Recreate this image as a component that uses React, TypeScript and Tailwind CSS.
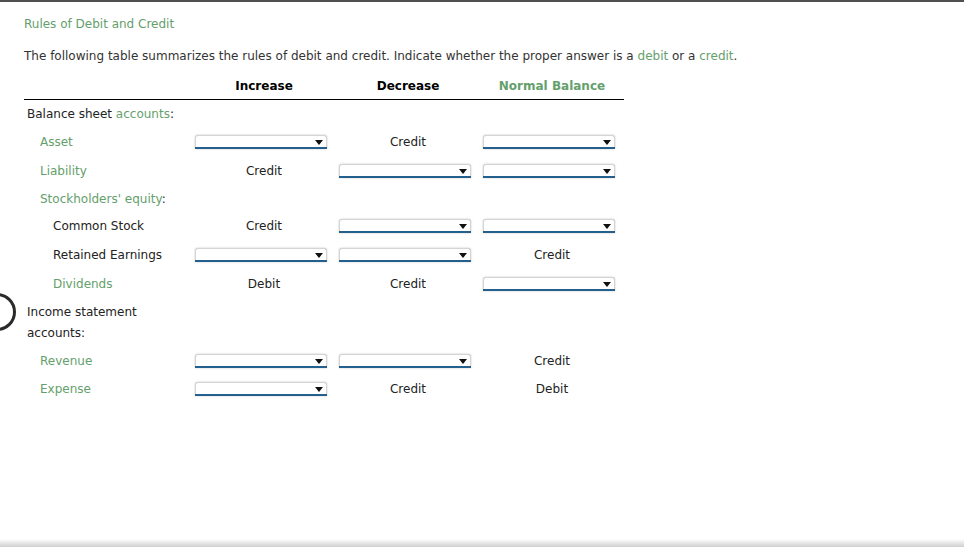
import React from "react";

const green = "text-[#64a06c]";

function Select() {
  return (
    <div className="ml-[3px] relative w-[132px] h-[14px] rounded-t-[3px] bg-white border border-b-0 border-[#d4d4d4] shadow-[0_0_2px_rgba(0,0,0,0.25)]">
      <div className="absolute left-[-1px] right-[-1px] bottom-0 h-[2px] bg-[#23608e]" />
      <svg className="absolute right-[3px] top-[4px]" width="8" height="5" viewBox="0 0 8 5">
        <polygon points="0,0 8,0 4,5" fill="#111" />
      </svg>
    </div>
  );
}

type Cell = { t: "s" } | { t: "x"; v: string } | { t: "e" };

function C({ c }: { c: Cell }) {
  if (c.t === "s")
    return (
      <div className="w-[144px] flex items-center">
        <Select />
      </div>
    );
  if (c.t === "x")
    return <div className="w-[144px] text-center text-[#222]">{c.v}</div>;
  return <div className="w-[144px]" />;
}

const S: Cell = { t: "s" };
const E: Cell = { t: "e" };
const X = (v: string): Cell => ({ t: "x", v });

function Row({
  label,
  cells,
  h,
  indent,
}: {
  label: React.ReactNode;
  cells: Cell[];
  h: string;
  indent: string;
}) {
  return (
    <div className={`flex items-center ${h}`}>
      <div className={`w-[168px] ${indent}`}>{label}</div>
      {cells.map((c, i) => (
        <C key={i} c={c} />
      ))}
    </div>
  );
}

export default function App() {
  return (
    <div
      className="relative w-[964px] h-[547px] bg-white flex flex-col overflow-hidden text-[12px] text-[#222]"
      style={{ fontFamily: '"DejaVu Sans", Verdana, sans-serif' }}
    >
      <div className="h-[2px] bg-[#505050] shrink-0" />
      <div className="pl-[24px] pt-[15px]">
        <div className={`${green} leading-[15px]`}>Rules of Debit and Credit</div>
        <div className="mt-[17px] leading-[15px] text-[#333]">
          The following table summarizes the rules of debit and credit. Indicate whether the proper answer is a{" "}
          <span className={green}>debit</span> or a <span className={green}>credit</span>.
        </div>
        <div className="mt-[8px] w-[600px]">
          <div className="flex h-[28px] items-center border-b border-black font-bold">
            <div className="w-[168px]" />
            <div className="w-[144px] text-center text-black">Increase</div>
            <div className="w-[144px] text-center text-black">Decrease</div>
            <div className={`w-[144px] text-center ${green}`}>Normal Balance</div>
          </div>
          <Row
            h="h-[28px]"
            indent="pl-[3px]"
            label={
              <>
                Balance sheet <span className={green}>accounts</span>:
              </>
            }
            cells={[E, E, E]}
          />
          <Row h="h-[28px]" indent="pl-[16px]" label={<span className={green}>Asset</span>} cells={[S, X("Credit"), S]} />
          <Row h="h-[29px]" indent="pl-[16px]" label={<span className={green}>Liability</span>} cells={[X("Credit"), S, S]} />
          <Row
            h="h-[27px]"
            indent="pl-[16px]"
            label={
              <>
                <span className={green}>Stockholders' equity</span>:
              </>
            }
            cells={[E, E, E]}
          />
          <Row h="h-[28px]" indent="pl-[29px]" label="Common Stock" cells={[X("Credit"), S, S]} />
          <Row h="h-[29px]" indent="pl-[29px]" label="Retained Earnings" cells={[S, S, X("Credit")]} />
          <Row
            h="h-[29px]"
            indent="pl-[29px]"
            label={<span className={green}>Dividends</span>}
            cells={[X("Debit"), X("Credit"), S]}
          />
          <Row
            h="h-[49px]"
            indent="pl-[3px] leading-[21px]"
            label={
              <>
                Income statement
                <br />
                accounts:
              </>
            }
            cells={[E, E, E]}
          />
          <Row h="h-[28px]" indent="pl-[16px]" label={<span className={green}>Revenue</span>} cells={[S, S, X("Credit")]} />
          <Row
            h="h-[28px]"
            indent="pl-[16px]"
            label={<span className={green}>Expense</span>}
            cells={[S, X("Credit"), X("Debit")]}
          />
        </div>
      </div>
      <div className="mt-auto h-[8px] bg-gradient-to-b from-white to-[#cfcfcf] shrink-0" />
      <div className="absolute left-[-22px] top-[293px] w-[38px] h-[38px] rounded-full border-[3px] border-[#2b2b2b]" />
    </div>
  );
}
